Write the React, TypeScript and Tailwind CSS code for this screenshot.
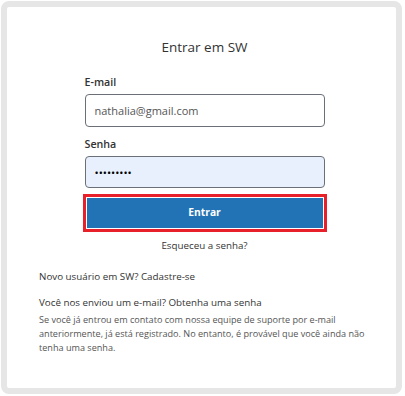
import React from 'react';

export default function App() {
  return (
    <div
      className="w-[405px] h-[396px] bg-white p-px"
      style={{ fontFamily: '"Open Sans", "Noto Sans", sans-serif' }}
    >
      <div className="h-[393px] w-[401px] rounded-lg border-[6px] border-[#e6e6e6] bg-white">
        {/* Formulário */}
        <div className="mx-auto flex w-[244px] flex-col pt-[30px] translate-x-[3px]">
          <h1 className="text-center text-[13.5px] leading-[20px] text-[#333]">Entrar em SW</h1>

          <label className="mt-[17px] px-[2px] text-[10.7px] font-semibold leading-[16px] text-[#333]">E-mail</label>
          <input
            type="text"
            defaultValue="nathalia@gmail.com"
            className="mt-[4px] h-[33px] mx-[2px] rounded-[4px] border border-[#6b6f78] bg-white px-[9px] text-[11px] text-[#555] outline-none"
          />

          <label className="mt-[9px] px-[2px] text-[10.7px] font-semibold leading-[16px] text-[#333]">Senha</label>
          <input
            type="password"
            defaultValue="123456789"
            className="mt-[4px] h-[32px] mx-[2px] rounded-[4px] border border-[#6b6f78] bg-[#e8f0fe] px-[9px] text-[11px] text-black outline-none"
          />

          <div className="mt-[6px] border-[3px] border-[#e8202a] p-px">
            <button className="h-[30px] w-full bg-[#2173b5] text-[10.3px] font-bold text-white">Entrar</button>
          </div>

          <a className="mt-[6px] text-center text-[9.8px] leading-[16px] text-[#333]">Esqueceu a senha?</a>
        </div>

        {/* Rodapé */}
        <div className="pl-[32px] pr-[14px] pt-[15px] text-[9.8px] text-[#333]">
          <p className="leading-[16px]">Novo usuário em SW? Cadastre-se</p>
          <p className="mt-[10px] leading-[16px]">Você nos enviou um e-mail? Obtenha uma senha</p>
          <p className="mt-[2px] text-[9.1px] leading-[14px] text-[#555]">
            Se você já entrou em contato com nossa equipe de suporte por e-mail anteriormente, já está registrado. No entanto, é provável que você ainda não tenha uma senha.
          </p>
        </div>
      </div>
    </div>
  );
}
